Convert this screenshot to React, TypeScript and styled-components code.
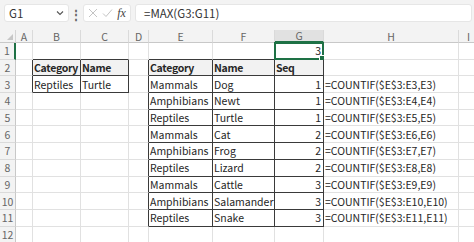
import React from 'react'
import styled, { createGlobalStyle } from 'styled-components'

const Global = createGlobalStyle`
  html, body { margin: 0; padding: 0; background: #f3f3f3; }
  body { font-family: "Noto Sans CJK JP", "Noto Sans", sans-serif; }
`

// ─── Toolbar ───────────────────────────────────────────────────────────────

const Toolbar = styled.div`
  height: 30px; display: flex; align-items: flex-start;
  padding: 4px 2px 0 4px; box-sizing: border-box; gap: 0;
  background: #f3f3f3;
`

const NameBox = styled.div`
  width: 65px; height: 18px; box-sizing: border-box;
  background: #fff; border: 1px solid #e6e6e6; border-radius: 3px;
  display: flex; align-items: center; justify-content: space-between;
  padding: 0 4px 0 4px; font-size: 11.5px; color: #333;
`

const Dots = styled.div`
  width: 14px; height: 18px; display: flex; align-items: center; justify-content: center;
  color: #666; font-size: 12px; font-weight: 700;
`

const FxBox = styled.div`
  width: 48px; height: 18px; box-sizing: border-box;
  background: #fff; border: 1px solid #e6e6e6; border-radius: 3px;
  display: flex; align-items: center; justify-content: space-around; padding: 0 2px;
`

const Fx = styled.span`
  font-family: "Liberation Serif", serif; font-style: italic; font-size: 12px; color: #444;
`

const FormulaBar = styled.div`
  flex: 1; height: 18px; margin-left: 4px; box-sizing: border-box;
  background: #fff; border: 1px solid #e6e6e6; border-radius: 3px;
  display: flex; align-items: center; padding-left: 8px;
  font-size: 11.5px; color: #333;
`

// ─── Sheet ─────────────────────────────────────────────────────────────────

const COLS = ['A', 'B', 'C', 'D', 'E', 'F', 'G', 'H', 'I']
const WIDTHS = [17, 48, 48, 20, 64, 62, 49, 135, 20]

const Sheet = styled.div`
  display: grid;
  grid-template-columns: 16px ${WIDTHS.map((w) => w + 'px').join(' ')};
  grid-template-rows: 13px;
  grid-auto-rows: 16.7px;
  background: #fff;
  font-size: 10.5px;
`

const Corner = styled.div`
  background: #f3f3f3; border-right: 1px solid #d4d4d4; border-bottom: 1px solid #c8c8c8;
  position: relative;
  &::after {
    content: ''; position: absolute; right: 2px; bottom: 2px;
    border-left: 6px solid transparent; border-bottom: 6px solid #c6c6c6;
  }
`

const ColHead = styled.div<{ $sel?: boolean }>`
  background: ${({ $sel }) => ($sel ? '#e1e1e1' : '#f3f3f3')};
  border-right: 1px solid #dadada;
  border-bottom: ${({ $sel }) => ($sel ? '2px solid #1e7145' : '1px solid #c8c8c8')};
  color: #666; display: flex; align-items: center; justify-content: center;
  box-sizing: border-box; font-size: 10.5px;
`

const RowHead = styled.div<{ $sel?: boolean }>`
  background: #f3f3f3;
  border-right: ${({ $sel }) => ($sel ? '2px solid #1e7145' : '1px solid #c8c8c8')};
  border-bottom: 1px solid #dadada;
  color: #666; display: flex; align-items: center; justify-content: center;
  box-sizing: border-box; font-size: 10.5px;
`

const Cell = styled.div<{ $r: string; $b: string; $bold?: boolean; $head?: boolean; $num?: boolean }>`
  box-sizing: border-box; overflow: visible; white-space: nowrap;
  border-right: 1px solid ${({ $r }) => $r};
  border-bottom: 1px solid ${({ $b }) => $b};
  background: ${({ $head }) => ($head ? '#f2f2f2' : '#fff')};
  font-weight: ${({ $bold }) => ($bold ? 700 : 400)};
  letter-spacing: ${({ $bold }) => ($bold ? '-0.3px' : '0')};
  color: #262626; display: flex; align-items: center;
  justify-content: ${({ $num }) => ($num ? 'flex-end' : 'flex-start')};
  padding: 0 2px 0 1px; position: relative;
`

const Selection = styled.div`
  position: absolute; inset: -1px -1px -1px -1px;
  border: 2px solid #1e7145; pointer-events: none;
  &::after {
    content: ''; position: absolute; right: -4px; bottom: -4px;
    width: 5px; height: 5px; background: #1e7145; border: 1px solid #fff;
  }
`

type Table = { r0: number; r1: number; c0: number; c1: number }
const TABLES: Table[] = [
  { r0: 2, r1: 3, c0: 1, c1: 2 },
  { r0: 2, r1: 11, c0: 4, c1: 6 },
]

const inTable = (r: number, c: number) =>
  TABLES.some((t) => r >= t.r0 && r <= t.r1 && c >= t.c0 && c <= t.c1)
const isHead = (r: number, c: number) =>
  TABLES.some((t) => r === t.r0 && c >= t.c0 && c <= t.c1)

const rows = [
  ['Mammals', 'Dog', 1],
  ['Amphibians', 'Newt', 1],
  ['Reptiles', 'Turtle', 1],
  ['Mammals', 'Cat', 2],
  ['Amphibians', 'Frog', 2],
  ['Reptiles', 'Lizard', 2],
  ['Mammals', 'Cattle', 3],
  ['Amphibians', 'Salamander', 3],
  ['Reptiles', 'Snake', 3],
]

function buildData(): Record<string, string | number> {
  const d: Record<string, string | number> = {
    '2,1': 'Category', '2,2': 'Name', '3,1': 'Reptiles', '3,2': 'Turtle',
    '2,4': 'Category', '2,5': 'Name', '2,6': 'Seq', '1,6': 3,
  }
  rows.forEach(([cat, name, seq], i) => {
    const r = i + 3
    d[`${r},4`] = cat
    d[`${r},5`] = name
    d[`${r},6`] = seq
    d[`${r},7`] = `=COUNTIF($E$3:E${r},E${r})`
  })
  return d
}

const DATA = buildData()
const GRID = '#e1e1e1'
const DARK = '#3a3a3a'

export default function App() {
  const cells: React.ReactNode[] = []
  for (let r = 1; r <= 12; r++) {
    cells.push(<RowHead key={`h${r}`} $sel={r === 1}>{r}</RowHead>)
    COLS.forEach((_, c) => {
      const v = DATA[`${r},${c}`]
      const right = inTable(r, c) || inTable(r, c + 1) ? DARK : GRID
      const bottom = inTable(r, c) || inTable(r + 1, c) ? DARK : GRID
      cells.push(
        <Cell
          key={`${r},${c}`}
          $r={right}
          $b={bottom}
          $head={isHead(r, c)}
          $bold={isHead(r, c)}
          $num={typeof v === 'number'}
        >
          {v}
          {r === 1 && c === 6 && <Selection />}
        </Cell>
      )
    })
  }

  return (
    <>
      <Global />
      <Toolbar>
        <NameBox>
          <span>G1</span>
          <svg width="8" height="8" viewBox="0 0 8 8">
            <path d="M1 2.5 L4 5.5 L7 2.5" fill="none" stroke="#555" strokeWidth="1.1" />
          </svg>
        </NameBox>
        <Dots>⋮</Dots>
        <FxBox>
          <svg width="10" height="10" viewBox="0 0 10 10">
            <path d="M1 1 L9 9 M9 1 L1 9" stroke="#c4c4c4" strokeWidth="1" />
          </svg>
          <svg width="11" height="10" viewBox="0 0 11 10">
            <path d="M1 5.5 L4 8.5 L10 1.5" fill="none" stroke="#c4c4c4" strokeWidth="1" />
          </svg>
          <Fx>fx</Fx>
        </FxBox>
        <FormulaBar>=MAX(G3:G11)</FormulaBar>
      </Toolbar>
      <Sheet>
        <Corner />
        {COLS.map((l, i) => (
          <ColHead key={l} $sel={i === 6}>{l}</ColHead>
        ))}
        {cells}
      </Sheet>
    </>
  )
}
